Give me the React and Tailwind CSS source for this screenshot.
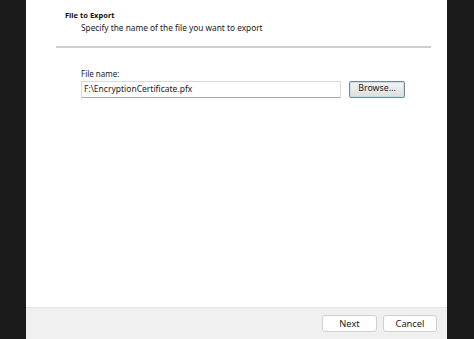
import React from "react";

export default function App() {
  return (
    <div className="w-[474px] h-[339px] bg-[#1b1b1b] flex overflow-hidden" style={{ fontFamily: "'Noto Sans', 'Open Sans', sans-serif" }}>
      <div className="ml-[26px] w-[421px] h-full bg-white flex flex-col text-[#000]">
        <div className="flex-1 flex flex-col">
          <div className="pl-[39px] pt-[10px] text-[7.5px] font-bold leading-[10px] text-[#111]">File to Export</div>
          <div className="pl-[55px] pt-[2px] text-[8.3px] leading-[12px] text-[#222]">
            Specify the name of the file you want to export
          </div>
          <div className="mt-[12px] ml-[30px] mr-[16px] h-[1.5px] bg-[#cfcfcf]" />
          <div className="pl-[55px] pt-[20px] text-[8px] leading-[12px] text-[#222]">File name:</div>
          <div className="pl-[55px] pt-[1px] flex items-center">
            <div className="w-[260px] h-[17px] border border-[#dadada] border-b-[#a8a8a8] flex items-center px-[2px] text-[8.5px] text-[#222]">
              F:\EncryptionCertificate.pfx
            </div>
            <div className="ml-[8px] w-[56px] h-[17px] border border-[#6f8a94] rounded-[2px] bg-gradient-to-b from-[#f4f4f4] to-[#dedede] flex items-center justify-center text-[8.8px] text-[#222] shadow-[inset_0_0_0_1px_#c4e0ea]">
              Browse...
            </div>
          </div>
        </div>
        <div className="h-[32px] bg-[#f0f0f0] border-t border-[#e6e6e6] flex items-start justify-end pt-[7px] pr-[10px] gap-[6px]">
          <div className="w-[55px] h-[17px] bg-white border border-[#d0d0d0] rounded-[3px] flex items-center justify-center text-[9.3px] text-[#222]">Next</div>
          <div className="w-[54px] h-[17px] bg-white border border-[#d0d0d0] rounded-[3px] flex items-center justify-center text-[9.3px] text-[#222]">Cancel</div>
        </div>
      </div>
    </div>
  );
}
